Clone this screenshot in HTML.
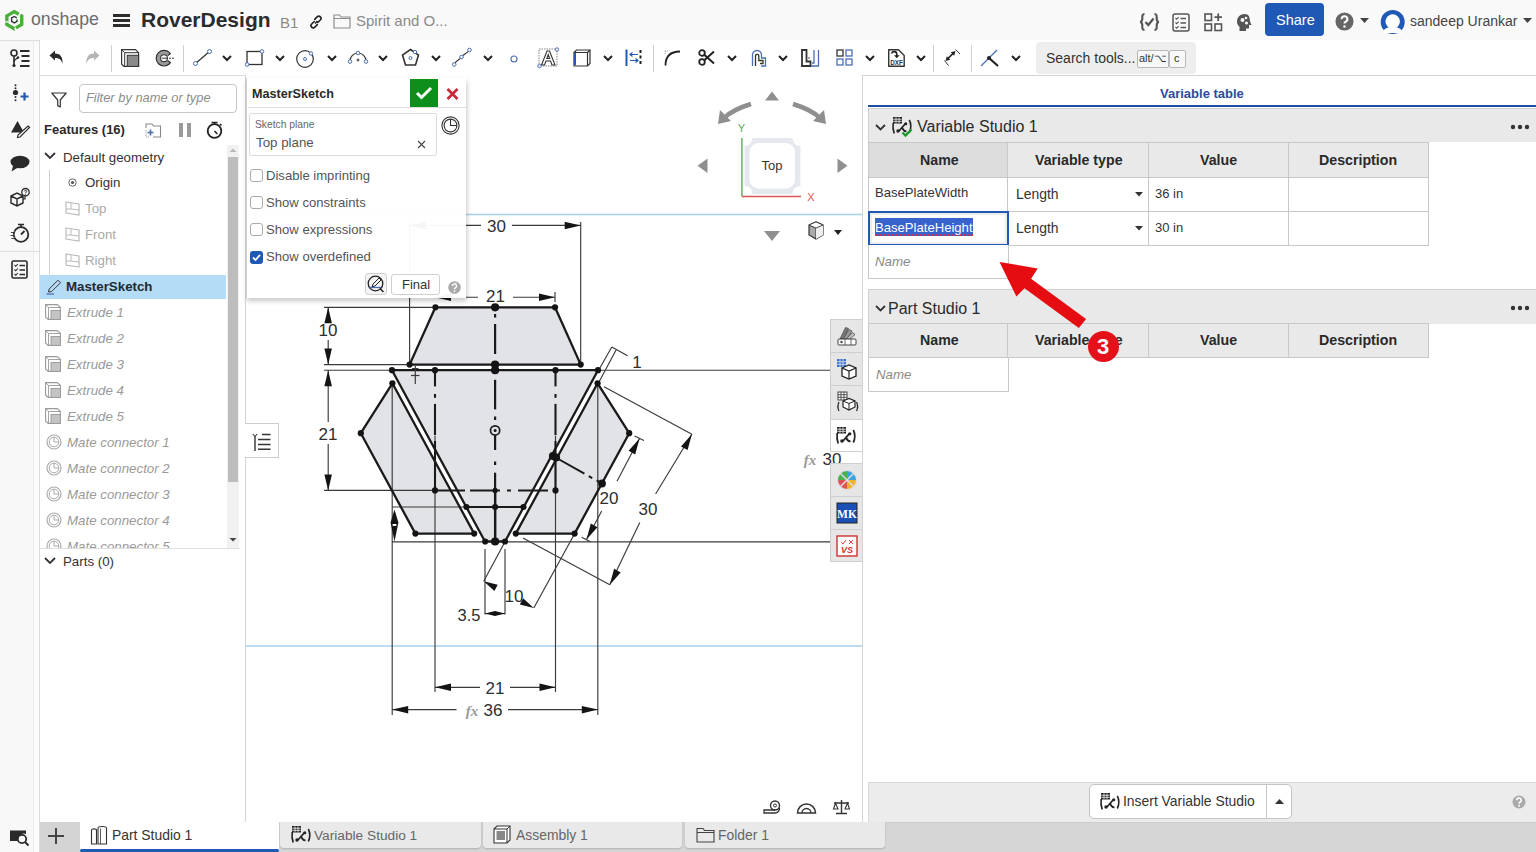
<!DOCTYPE html>
<html><head><meta charset="utf-8"><style>
*{box-sizing:border-box;margin:0;padding:0}
body{width:1536px;height:852px;overflow:hidden;position:relative;font-family:"Liberation Sans",sans-serif;background:#fff;color:#333}
.a{position:absolute}
.t{position:absolute;white-space:nowrap;line-height:1}
svg{position:absolute;overflow:visible}
</style></head><body>
<!-- HEADER -->
<div class="a" style="left:0;top:0;width:1536px;height:40px;background:#f9f9f9"></div>

<!-- logo -->
<svg style="left:0px;top:0px" width="30" height="40" viewBox="0 0 30 40">
<path d="M14.3 11.6 L21.75 15.9 L21.75 24.5 L14.3 28.8 L6.85 24.5 L6.85 15.9 Z" fill="none" stroke="#4cae3c" stroke-width="3.4" stroke-dasharray="5.2 1.8 17 1.8 10.5 1.4 30"/>
<path d="M16.8 17.9 L14.3 16.5 L11.6 18 L11.6 21.4 L14.3 22.9 L17 21.4 L17 19.5" fill="none" stroke="#35303a" stroke-width="1.4"/>
</svg>
<div class="t" style="left:31px;top:11px;font-size:17.7px;color:#6b6b6b;letter-spacing:0px">onshape</div>
<!-- hamburger -->
<div class="a" style="left:113px;top:14px;width:17px;height:3px;background:#2d2d2d"></div>
<div class="a" style="left:113px;top:19px;width:17px;height:3px;background:#2d2d2d"></div>
<div class="a" style="left:113px;top:24px;width:17px;height:3px;background:#2d2d2d"></div>
<div class="t" style="left:141px;top:9px;font-size:21px;font-weight:bold;color:#2b2b2b">RoverDesign</div>
<div class="t" style="left:280px;top:15px;font-size:15px;color:#8a8a8a">B1</div>
<!-- link icon -->
<svg style="left:308px;top:14px" width="16" height="16" viewBox="0 0 16 16">
<path d="M7 9.5 L9.5 7" stroke="#222" stroke-width="1.6" fill="none"/>
<path d="M6.2 7.5 L3.5 10.2 a2.2 2.2 0 0 0 3.1 3.1 L9.3 10.6" stroke="#222" stroke-width="1.6" fill="none" stroke-linecap="round"/>
<path d="M9.8 8.5 L12.5 5.8 a2.2 2.2 0 0 0 -3.1 -3.1 L6.7 5.4" stroke="#222" stroke-width="1.6" fill="none" stroke-linecap="round"/>
</svg>
<!-- folder icon -->
<svg style="left:333px;top:13px" width="18" height="16" viewBox="0 0 18 16">
<path d="M1 2 H6.5 L8 4 H17 V15 H1 Z" fill="none" stroke="#8c8c8c" stroke-width="1.2"/>
<path d="M1 5.5 H17" stroke="#8c8c8c" stroke-width="1"/>
</svg>
<div class="t" style="left:356px;top:13px;font-size:15px;color:#8a8a8a">Spirit and O...</div>
<!-- right header icons -->
<svg style="left:1139px;top:13px" width="21" height="18" viewBox="0 0 21 18"><path d="M5.5 1 C3 1 3.3 3 3.3 5.5 C3.3 7.8 2.8 8.6 1.2 9 C2.8 9.4 3.3 10.2 3.3 12.5 C3.3 15 3 17 5.5 17" fill="none" stroke="#555" stroke-width="2.1"/><path d="M15.5 1 C18 1 17.7 3 17.7 5.5 C17.7 7.8 18.2 8.6 19.8 9 C18.2 9.4 17.7 10.2 17.7 12.5 C17.7 15 18 17 15.5 17" fill="none" stroke="#555" stroke-width="2.1"/><path d="M6.5 9 L9.3 12 L14.5 5.5" fill="none" stroke="#555" stroke-width="2.3"/></svg>
<svg style="left:1172px;top:12.5px" width="18" height="19" viewBox="0 0 18 19">
<rect x="1" y="1" width="16" height="17" rx="2" fill="none" stroke="#555" stroke-width="1.5"/>
<path d="M3.5 5 l1.2 1.2 l2-2 M3.5 9.5 l1.2 1.2 l2-2 M3.5 14 l1.2 1.2 l2-2" stroke="#555" stroke-width="1.1" fill="none"/>
<path d="M8.5 5.5 H14 M8.5 10 H14 M8.5 14.5 H14" stroke="#555" stroke-width="1.4"/>
</svg>
<svg style="left:1204px;top:13px" width="19" height="19" viewBox="0 0 19 19">
<rect x="1" y="1" width="6.5" height="6.5" fill="none" stroke="#555" stroke-width="1.6"/>
<rect x="1" y="11" width="6.5" height="6.5" fill="none" stroke="#555" stroke-width="1.6"/>
<rect x="11" y="11" width="6.5" height="6.5" fill="none" stroke="#555" stroke-width="1.6"/>
<path d="M14.2 0.5 V8 M10.5 4.2 H18" stroke="#555" stroke-width="1.8"/>
</svg>
<svg style="left:1236px;top:12.5px" width="18" height="19" viewBox="0 0 18 19">
<path d="M9 1 C4 1 1 4.5 1 8.5 C1 11 2 12.5 3.5 13.5 V18 H10 V15.5 H13 V12 H15.5 L14 8.5 C14 4 12.5 1 9 1 Z" fill="#555"/>
<circle cx="6.5" cy="7" r="2" fill="#f7f7f7"/><circle cx="10.5" cy="10" r="1.6" fill="#f7f7f7"/><circle cx="10" cy="5" r="1.3" fill="#f7f7f7"/>
</svg>
<div class="a" style="left:1265px;top:3px;width:59px;height:33px;background:#1f58b5;border-radius:4px"></div>
<div class="t" style="left:1276px;top:13px;font-size:14.5px;color:#fff">Share</div>
<svg style="left:1335px;top:12px" width="19" height="19" viewBox="0 0 20 20">
<circle cx="10" cy="10" r="9.5" fill="#666"/>
<path d="M7 7.5 a3 3 0 1 1 4.2 2.7 c-1 .5 -1.2 1 -1.2 2" stroke="#fff" stroke-width="2.2" fill="none"/>
<circle cx="10" cy="15.3" r="1.3" fill="#fff"/>
</svg>
<svg style="left:1360px;top:18px" width="9" height="5" viewBox="0 0 9 5"><path d="M0 0 H9 L4.5 5 Z" fill="#444"/></svg>
<svg style="left:1380px;top:10px" width="26" height="23" viewBox="0 0 26 23"><circle cx="12.7" cy="12" r="12" fill="#1f58b5"/><circle cx="12.7" cy="11.5" r="7.2" fill="#fff"/><path d="M2 23 C4 18 8 17 12.7 17 C17.4 17 21.4 18 23.4 23 Z" fill="#fff"/></svg>
<div class="t" style="left:1410px;top:14px;font-size:14px;color:#444">sandeep Urankar</div>
<svg style="left:1523px;top:18px" width="9" height="5" viewBox="0 0 9 5"><path d="M0 0 H9 L4.5 5 Z" fill="#444"/></svg>

<!-- LEFT COLUMN -->
<div class="a" style="left:0;top:40px;width:40px;height:812px;background:#fbfbfb;border-right:1px solid #dcdcdc;border-top:1px solid #dedede"></div><div class="a" style="left:0;top:41px;width:34px;height:811px;background:#f8f8f8;border-right:1px solid #ececec"></div>
<!-- TOOLBAR -->
<div class="a" style="left:40px;top:40px;width:1496px;height:36px;background:#fff"></div>

<!-- toolbar icons -->
<svg style="left:49px;top:50px" width="15" height="15" viewBox="0 0 15 15"><path d="M0.5 5.5 L6 0.5 V3.5 C11 3.5 14 6.5 13.5 14 C12.5 9.5 10 8 6 8 V10.5 Z" fill="#2a2a2a"/></svg>
<svg style="left:85px;top:50px" width="15" height="15" viewBox="0 0 15 15"><path d="M14.5 5.5 L9 0.5 V3.5 C4 3.5 1 6.5 1.5 14 C2.5 9.5 5 8 9 8 V10.5 Z" fill="#b5b5b5"/></svg>
<div class="a" style="left:111px;top:45px;width:1px;height:27px;background:#cfcfcf"></div>
<svg style="left:121px;top:49px" width="18" height="18" viewBox="0 0 18 18"><path d="M0.6 0.6 H14.5 L17.6 3.7 V17.4 H2.8 L0.6 15 Z" fill="#fff" stroke="#333" stroke-width="1.2" stroke-linejoin="round"/><path d="M0.6 0.6 L3.7 3.7 H17.6 M3.7 3.7 V17.4" stroke="#333" stroke-width="1" fill="none"/><rect x="6.3" y="6.3" width="11.3" height="11.1" fill="#8a8a8a" stroke="#333" stroke-width="1"/></svg>
<svg style="left:156px;top:49px" width="19" height="19" viewBox="0 0 19 19"><circle cx="8" cy="9.2" r="7.8" fill="#9a9a9a" stroke="#333" stroke-width="1.2"/><path d="M8 9.2 L16.5 3.5 L17.5 14.8 Z" fill="#fff"/><path d="M11.8 6.6 L14.4 4.6 M11.8 11.8 L14.4 13.8" stroke="#333" stroke-width="1.2"/><circle cx="8" cy="9.2" r="3.4" fill="#fff" stroke="#333" stroke-width="1.1"/><path d="M6 9.2 H12 M13 9.2 H15 M16 9.2 H18" stroke="#333" stroke-width="1"/></svg>
<div class="a" style="left:183px;top:45px;width:1px;height:27px;background:#cfcfcf"></div>
<svg style="left:193px;top:49px" width="19" height="17" viewBox="0 0 19 17"><path d="M2.5 14.5 L16.5 2.5" stroke="#333" stroke-width="1.3"/><circle cx="2.5" cy="14.5" r="2" fill="#fff" stroke="#4a6fb5" stroke-width="1"/><circle cx="16.5" cy="2.5" r="2" fill="#fff" stroke="#4a6fb5" stroke-width="1"/></svg>
<svg style="left:222px;top:55px" width="10" height="6" viewBox="0 0 10 6"><path d="M1 1 L5 5 L9 1" stroke="#222" stroke-width="2" fill="none"/></svg>
<svg style="left:245px;top:49px" width="19" height="17" viewBox="0 0 19 17"><rect x="2" y="2.5" width="15" height="13" fill="none" stroke="#333" stroke-width="1.3"/><circle cx="2" cy="15.5" r="1.8" fill="#fff" stroke="#4a6fb5"/><circle cx="17" cy="2.5" r="1.8" fill="#fff" stroke="#4a6fb5"/></svg>
<svg style="left:275px;top:55px" width="10" height="6" viewBox="0 0 10 6"><path d="M1 1 L5 5 L9 1" stroke="#222" stroke-width="2" fill="none"/></svg>
<svg style="left:296px;top:49px" width="19" height="19" viewBox="0 0 19 19"><circle cx="9" cy="10" r="8.3" fill="none" stroke="#333" stroke-width="1.2"/><circle cx="9" cy="10" r="1.5" fill="none" stroke="#4a6fb5"/><circle cx="15" cy="4.5" r="1.7" fill="#fff" stroke="#4a6fb5"/></svg>
<svg style="left:327px;top:55px" width="10" height="6" viewBox="0 0 10 6"><path d="M1 1 L5 5 L9 1" stroke="#222" stroke-width="2" fill="none"/></svg>
<svg style="left:348px;top:49px" width="20" height="16" viewBox="0 0 20 16"><path d="M2 12 A8 8 0 0 1 18 12" fill="none" stroke="#333" stroke-width="1.2"/><circle cx="2" cy="12.5" r="1.8" fill="#fff" stroke="#4a6fb5"/><circle cx="18" cy="12.5" r="1.8" fill="#fff" stroke="#4a6fb5"/><circle cx="10" cy="4" r="1.8" fill="#fff" stroke="#4a6fb5"/><path d="M8.5 11 H11.5 M10 9.5 V12.5" stroke="#333" stroke-width="1"/></svg>
<svg style="left:378px;top:55px" width="10" height="6" viewBox="0 0 10 6"><path d="M1 1 L5 5 L9 1" stroke="#222" stroke-width="2" fill="none"/></svg>
<svg style="left:401px;top:48px" width="19" height="19" viewBox="0 0 19 19"><path d="M9.5 1.5 L17.5 7 L14.5 17 H4.5 L1.5 7 Z" fill="none" stroke="#333" stroke-width="1.6"/><circle cx="9.5" cy="10" r="1.5" fill="none" stroke="#4a6fb5"/><circle cx="14" cy="4" r="1.7" fill="#fff" stroke="#4a6fb5"/></svg>
<svg style="left:431px;top:55px" width="10" height="6" viewBox="0 0 10 6"><path d="M1 1 L5 5 L9 1" stroke="#222" stroke-width="2" fill="none"/></svg>
<svg style="left:452px;top:48px" width="20" height="19" viewBox="0 0 20 19"><path d="M2 16.5 C5 11 8 12 9.5 9 C11 6 15 6 17.5 2" fill="none" stroke="#333" stroke-width="1.2"/><circle cx="2.2" cy="16.5" r="1.8" fill="#fff" stroke="#4a6fb5"/><circle cx="9.5" cy="9" r="1.8" fill="#fff" stroke="#4a6fb5"/><circle cx="17.5" cy="2" r="1.8" fill="#fff" stroke="#4a6fb5"/></svg>
<svg style="left:483px;top:55px" width="10" height="6" viewBox="0 0 10 6"><path d="M1 1 L5 5 L9 1" stroke="#222" stroke-width="2" fill="none"/></svg>
<svg style="left:510px;top:55px" width="8" height="8" viewBox="0 0 8 8"><circle cx="4" cy="4" r="3" fill="none" stroke="#4a6fb5" stroke-width="1.1"/></svg>
<svg style="left:538px;top:48px" width="21" height="20" viewBox="0 0 21 20"><rect x="1" y="1" width="18" height="17" fill="none" stroke="#666" stroke-width="0.8" stroke-dasharray="1.5 1"/><path d="M3.5 17 L9 3 H11.5 L17 17 H14 L12.5 13 H8 L6.5 17 Z M8.8 10.5 H11.7 L10.2 6.5 Z" fill="#fff" stroke="#333" stroke-width="1.1"/><circle cx="1.5" cy="18" r="1.7" fill="#fff" stroke="#4a6fb5"/><circle cx="19" cy="1.5" r="1.7" fill="#fff" stroke="#4a6fb5"/></svg>
<svg style="left:573px;top:49px" width="18" height="18" viewBox="0 0 18 18"><path d="M1 3.5 L3.5 1 H17 V14.5 L14.5 17 H1 Z" fill="none" stroke="#333" stroke-width="1.2"/><path d="M1 3.5 H14.5 V17 M14.5 3.5 L17 1" stroke="#333" stroke-width="1.2" fill="none"/><path d="M2 4 V16" stroke="#1f58b5" stroke-width="2"/></svg>
<svg style="left:603px;top:55px" width="10" height="6" viewBox="0 0 10 6"><path d="M1 1 L5 5 L9 1" stroke="#222" stroke-width="2" fill="none"/></svg>
<svg style="left:625px;top:49px" width="18" height="18" viewBox="0 0 18 18"><path d="M1.5 0.5 V17" stroke="#1f58b5" stroke-width="2"/><path d="M15.5 1 V17" stroke="#222" stroke-width="2" stroke-dasharray="3 2.5"/><path d="M13 5.5 H5.5 M7.5 3.5 L5 5.5 L7.5 7.5 M5 11.5 H12.5 M10.5 9.5 L13 11.5 L10.5 13.5" stroke="#1f58b5" stroke-width="1.2" fill="none"/></svg>
<div class="a" style="left:653px;top:45px;width:1px;height:27px;background:#cfcfcf"></div>
<svg style="left:664px;top:50px" width="17" height="16" viewBox="0 0 17 16"><path d="M1.5 15.5 C1.5 7 6 1.5 16 1.5" fill="none" stroke="#222" stroke-width="1.8"/><path d="M1 1 H4 M1 1 V4" stroke="#888" stroke-width="0.8" stroke-dasharray="1 1"/></svg>
<svg style="left:698px;top:49px" width="17" height="17" viewBox="0 0 17 17"><circle cx="4" cy="4" r="2.8" fill="none" stroke="#222" stroke-width="1.8"/><circle cx="4" cy="13" r="2.8" fill="none" stroke="#222" stroke-width="1.8"/><path d="M6 5.5 L16 14.5 M6 11.5 L16 2.5" stroke="#222" stroke-width="2"/></svg>
<svg style="left:727px;top:55px" width="10" height="6" viewBox="0 0 10 6"><path d="M1 1 L5 5 L9 1" stroke="#222" stroke-width="2" fill="none"/></svg>
<svg style="left:751px;top:49px" width="16" height="18" viewBox="0 0 16 18"><path d="M1.5 17 V6 A4.5 4.5 0 0 1 10.5 6 V9 H14.5 V17 H10" fill="none" stroke="#4a6fb5" stroke-width="1.3"/><path d="M4.5 17 V6.5 A1.8 1.8 0 0 1 7.8 6.5 V11.5 H12 V14.5 H9" fill="none" stroke="#333" stroke-width="1.3"/></svg>
<svg style="left:778px;top:55px" width="10" height="6" viewBox="0 0 10 6"><path d="M1 1 L5 5 L9 1" stroke="#222" stroke-width="2" fill="none"/></svg>
<svg style="left:801px;top:49px" width="19" height="18" viewBox="0 0 19 18"><path d="M1 1 H5.5 V12.5 H9.5 V17 H1 Z" fill="none" stroke="#333" stroke-width="1.8"/><path d="M13 1 V14 H11 M17.5 1 V17 H10" fill="none" stroke="#4a6fb5" stroke-width="1.3"/><circle cx="8" cy="9" r="0.8" fill="#333"/></svg>
<svg style="left:836px;top:49px" width="17" height="17" viewBox="0 0 17 17"><rect x="1" y="1" width="6" height="6" fill="none" stroke="#333" stroke-width="1.3"/><rect x="10" y="1" width="6" height="6" fill="none" stroke="#4a6fb5" stroke-width="1.3"/><rect x="1" y="10" width="6" height="6" fill="none" stroke="#4a6fb5" stroke-width="1.3"/><rect x="10" y="10" width="6" height="6" fill="none" stroke="#4a6fb5" stroke-width="1.3"/></svg>
<svg style="left:865px;top:55px" width="10" height="6" viewBox="0 0 10 6"><path d="M1 1 L5 5 L9 1" stroke="#222" stroke-width="2" fill="none"/></svg>
<svg style="left:888px;top:49px" width="17" height="18" viewBox="0 0 17 18"><path d="M0.7 0.7 H10.5 L16.2 6.4 V17.3 H0.7 Z" fill="#fff" stroke="#333" stroke-width="1.4" stroke-linejoin="round"/><path d="M3.5 4.5 C4.5 1.8 8.8 1.8 8.8 5.5 V7.5" stroke="#222" stroke-width="1.6" fill="none"/><path d="M6 6.2 L8.8 9.3 L11.6 6.2 Z" fill="#222"/><text x="8.5" y="16" font-size="6.3" font-family="Liberation Sans" font-weight="bold" text-anchor="middle" fill="#333">DXF</text></svg>
<svg style="left:916px;top:55px" width="10" height="6" viewBox="0 0 10 6"><path d="M1 1 L5 5 L9 1" stroke="#222" stroke-width="2" fill="none"/></svg>
<div class="a" style="left:933px;top:45px;width:1px;height:27px;background:#cfcfcf"></div>
<svg style="left:944px;top:49px" width="17" height="18" viewBox="0 0 17 18"><path d="M3.5 10 L9.5 4" stroke="#222" stroke-width="1.7"/><path d="M1.5 12 L2.8 7.2 L6.3 10.7 Z M11.5 2 L6.7 3.3 L10.2 6.8 Z" fill="#222"/><path d="M0.5 11.5 L4.5 16.5 M11.5 0.5 L16 5" stroke="#333" stroke-width="1"/></svg>
<div class="a" style="left:971px;top:45px;width:1px;height:27px;background:#cfcfcf"></div>
<svg style="left:980px;top:49px" width="19" height="18" viewBox="0 0 19 18"><path d="M1 17 L17 1" stroke="#4a6fb5" stroke-width="1.3"/><path d="M9 9 L18 17" stroke="#222" stroke-width="2.2"/><circle cx="9" cy="9" r="2" fill="#222"/></svg>
<svg style="left:1011px;top:55px" width="10" height="6" viewBox="0 0 10 6"><path d="M1 1 L5 5 L9 1" stroke="#222" stroke-width="2" fill="none"/></svg>
<div class="a" style="left:1036px;top:42px;width:160px;height:32px;background:#eeeeee;border-radius:4px"></div>
<div class="t" style="left:1046px;top:51px;font-size:14px;color:#333">Search tools...</div>
<div class="a" style="left:1137px;top:50px;width:32px;height:18px;background:#f8f8f8;border:1px solid #b8b8b8;border-radius:2px"></div>
<div class="t" style="left:1139px;top:53px;font-size:11px;color:#333">alt/&#8997;</div>
<div class="a" style="left:1169px;top:50px;width:17px;height:18px;background:#f8f8f8;border:1px solid #b8b8b8;border-radius:2px"></div>
<div class="t" style="left:1174px;top:53px;font-size:11px;color:#333">c</div>

<!-- left column icons -->
<svg style="left:10px;top:49px" width="20" height="19" viewBox="0 0 20 19"><circle cx="4" cy="4" r="3" fill="none" stroke="#2a2a2a" stroke-width="1.6"/><path d="M4 7 V16.5" stroke="#2a2a2a" stroke-width="1.6"/><circle cx="4" cy="16.5" r="1.6" fill="#2a2a2a"/><path d="M4 13 C4 10 7 10 8 8.5" stroke="#2a2a2a" stroke-width="1.4" fill="none"/><circle cx="8" cy="8.5" r="1.2" fill="#2a2a2a"/><path d="M10 2 H19.5 M11.5 7 H19.5 M11.5 12 H19.5 M10 17 H19.5" stroke="#2a2a2a" stroke-width="1.8"/></svg>
<svg style="left:12px;top:84px" width="18" height="18" viewBox="0 0 18 18"><circle cx="3.5" cy="1.2" r="1" fill="#2a2a2a"/><circle cx="3.5" cy="4.2" r="1" fill="#2a2a2a"/><circle cx="3.5" cy="8.5" r="2.6" fill="#2a2a2a"/><circle cx="3.5" cy="13" r="1" fill="#2a2a2a"/><circle cx="3.5" cy="16.2" r="1" fill="#2a2a2a"/><path d="M8.5 12.5 H16.5 M12.5 8.5 V16.5" stroke="#1f58b5" stroke-width="2.2"/></svg>
<svg style="left:11px;top:120px" width="19" height="18" viewBox="0 0 19 18"><path d="M6.5 1 L13 12.5 H0 Z" fill="#2a2a2a"/><path d="M17 6 L18.5 7.5 L9 17 L6.5 17.5 L7 15 Z" fill="#fff" stroke="#2a2a2a" stroke-width="1.2"/></svg>
<svg style="left:10px;top:155px" width="20" height="17" viewBox="0 0 20 17"><ellipse cx="10" cy="7" rx="9.5" ry="6.3" fill="#2a2a2a"/><path d="M3 11 L1.5 16.5 L8 12.5 Z" fill="#2a2a2a"/></svg>
<svg style="left:10px;top:188px" width="20" height="19" viewBox="0 0 20 19"><path d="M1 8 L7 5 L13 8 V15 L7 18 L1 15 Z M1 8 L7 11 L13 8 M7 11 V18" fill="none" stroke="#2a2a2a" stroke-width="1.4"/><circle cx="15.5" cy="4.2" r="3.7" fill="#fff" stroke="#2a2a2a" stroke-width="1.3"/><text x="15.5" y="6.6" font-size="6.5" font-weight="bold" font-family="Liberation Sans" text-anchor="middle" fill="#2a2a2a">?</text><path d="M15 8 V11 H13" stroke="#2a2a2a" stroke-width="1.2" fill="none"/></svg>
<svg style="left:10px;top:223px" width="20" height="20" viewBox="0 0 20 20"><circle cx="11" cy="11.5" r="7.3" fill="none" stroke="#2a2a2a" stroke-width="1.8"/><path d="M8 1.5 H14 M11 1.5 V4" stroke="#2a2a2a" stroke-width="1.6"/><path d="M11 11.5 L14.5 8" stroke="#2a2a2a" stroke-width="1.8"/><path d="M0.5 9 H4.5 M0.5 12 H3.5 M1.5 15 H4.5" stroke="#fff" stroke-width="1.2"/><path d="M1 9.5 H5 M0.5 12.5 H4 M1.5 15.5 H5" stroke="#2a2a2a" stroke-width="0.9"/></svg>
<div class="a" style="left:0;top:251px;width:40px;height:1px;background:#dedede"></div>
<svg style="left:11px;top:260px" width="17" height="19" viewBox="0 0 17 19"><rect x="1" y="1" width="15" height="17" rx="1.5" fill="none" stroke="#2a2a2a" stroke-width="1.6"/><path d="M3.5 5 l1.3 1.3 l2-2.3 M3.5 9.5 l1.3 1.3 l2-2.3 M3.5 14 l1.3 1.3 l2-2.3" stroke="#2a2a2a" stroke-width="1.1" fill="none"/><path d="M8.5 5.5 H14 M8.5 10 H14 M8.5 14.5 H14" stroke="#2a2a2a" stroke-width="1.7"/></svg>
<svg style="left:9px;top:829px" width="21" height="17" viewBox="0 0 21 17"><path d="M1 1.5 H17 V5 A6 6 0 0 0 9 12 H1 Z" fill="#2a2a2a"/><circle cx="13" cy="10" r="4.2" fill="none" stroke="#2a2a2a" stroke-width="1.8"/><path d="M16 13 L19.5 16.5" stroke="#2a2a2a" stroke-width="2"/></svg>

<!-- FEATURE PANEL -->
<div class="a" style="left:40px;top:75px;width:206px;height:747px;background:#fff;border-right:1px solid #d4d4d4;border-top:1px solid #dcdcdc"></div>

<!-- feature panel content -->
<svg style="left:51px;top:92px" width="16" height="16" viewBox="0 0 16 16"><path d="M0.8 1 H15.2 L9.3 8 V15 L6.7 13.6 V8 Z" fill="none" stroke="#333" stroke-width="1.2" stroke-linejoin="round"/></svg>
<div class="a" style="left:79px;top:84px;width:158px;height:29px;border:1px solid #c6c6c6;border-radius:4px;background:#fff"></div>
<div class="t" style="left:86px;top:92px;font-size:12.9px;font-style:italic;color:#8c8c8c">Filter by name or type</div>
<div class="t" style="left:44px;top:123px;font-size:13px;font-weight:bold;color:#2a2a2a">Features (16)</div>
<svg style="left:145px;top:121px" width="20" height="17" viewBox="0 0 20 17"><path d="M1 7 V3 H7 L8.5 5 H15.5 V16 H8" fill="none" stroke="#888" stroke-width="1.1"/><path d="M1 9 V16 H4" fill="none" stroke="#9a9a9a" stroke-width="1" stroke-dasharray="1.3 1"/><path d="M2.5 11.5 H8.5 M5.5 8.5 V14.5" stroke="#4a6fb5" stroke-width="1.6"/></svg>
<div class="a" style="left:179px;top:123px;width:4px;height:14px;background:#9a9a9a"></div>
<div class="a" style="left:187px;top:123px;width:4px;height:14px;background:#9a9a9a"></div>
<svg style="left:206px;top:121px" width="17" height="18" viewBox="0 0 17 18"><circle cx="8.5" cy="10" r="6.8" fill="none" stroke="#222" stroke-width="1.8"/><path d="M5.5 1.5 H11.5 M8.5 1.5 V3.3 M14 3 L15.5 4.5" stroke="#222" stroke-width="1.6"/><path d="M8.5 10 L11.3 13" stroke="#222" stroke-width="1.6"/></svg>
<!-- tree -->
<svg style="left:44px;top:152px" width="12" height="8" viewBox="0 0 12 8"><path d="M1 1 L6 6 L11 1" stroke="#333" stroke-width="1.8" fill="none"/></svg>
<div class="t" style="left:63px;top:151px;font-size:13.3px;color:#333">Default geometry</div>
<div class="a" style="left:49px;top:170px;width:1px;height:104px;background:#cfcfcf"></div>
<svg style="left:68px;top:178px" width="9" height="9" viewBox="0 0 9 9"><circle cx="4.5" cy="4.5" r="3.7" fill="none" stroke="#555" stroke-width="0.9"/><circle cx="4.5" cy="4.5" r="1.6" fill="#555"/></svg>
<div class="t" style="left:85px;top:176px;font-size:13.3px;color:#333">Origin</div>
<svg style="left:65px;top:201px" width="15" height="15" viewBox="0 0 15 15"><path d="M1 1 L14 3 V14 L1 12 Z" fill="#fff" stroke="#bbb" stroke-width="1.2"/><path d="M6 1.8 V8 H1 M6 8 L14 9" stroke="#bbb" stroke-width="1" fill="none"/></svg>
<div class="t" style="left:85px;top:202px;font-size:13.3px;color:#aaa">Top</div>
<svg style="left:65px;top:227px" width="15" height="15" viewBox="0 0 15 15"><path d="M1 1 L14 3 V14 L1 12 Z" fill="#fff" stroke="#bbb" stroke-width="1.2"/><path d="M6 1.8 V8 H1 M6 8 L14 9" stroke="#bbb" stroke-width="1" fill="none"/></svg>
<div class="t" style="left:85px;top:228px;font-size:13.3px;color:#aaa">Front</div>
<svg style="left:65px;top:253px" width="15" height="15" viewBox="0 0 15 15"><path d="M1 1 L14 3 V14 L1 12 Z" fill="#fff" stroke="#bbb" stroke-width="1.2"/><path d="M6 1.8 V8 H1 M6 8 L14 9" stroke="#bbb" stroke-width="1" fill="none"/></svg>
<div class="t" style="left:85px;top:254px;font-size:13.3px;color:#aaa">Right</div>
<div class="a" style="left:40px;top:275px;width:186px;height:24px;background:#b5dcf6"></div>
<svg style="left:46px;top:279px" width="16" height="16" viewBox="0 0 16 16"><path d="M2.5 13 L3.2 10 L12 1.2 L14.5 3.7 L5.7 12.5 Z" fill="none" stroke="#333" stroke-width="1"/><path d="M0.5 15 H8" stroke="#4a6fb5" stroke-width="1.3"/></svg>
<div class="t" style="left:66px;top:280px;font-size:13.3px;font-weight:bold;color:#1e2a35">MasterSketch</div>
<svg style="left:45px;top:304px" width="17" height="17" viewBox="0 0 17 17"><path d="M0.6 0.6 H12.5 L15.4 3.5 V15.4 H3 L0.6 13 Z" fill="#fff" stroke="#999" stroke-width="1.1" stroke-linejoin="round"/><path d="M0.6 0.6 L3.5 3.5 H15.4 M3.5 3.5 V15.4" stroke="#999" stroke-width="0.9" fill="none"/><rect x="6" y="6.5" width="9.4" height="8.9" fill="#c4c4c4" stroke="#999" stroke-width="0.9"/></svg><div class="t" style="left:67px;top:306px;font-size:13.3px;font-style:italic;color:#9a9a9a">Extrude 1</div>
<svg style="left:45px;top:330px" width="17" height="17" viewBox="0 0 17 17"><path d="M0.6 0.6 H12.5 L15.4 3.5 V15.4 H3 L0.6 13 Z" fill="#fff" stroke="#999" stroke-width="1.1" stroke-linejoin="round"/><path d="M0.6 0.6 L3.5 3.5 H15.4 M3.5 3.5 V15.4" stroke="#999" stroke-width="0.9" fill="none"/><rect x="6" y="6.5" width="9.4" height="8.9" fill="#c4c4c4" stroke="#999" stroke-width="0.9"/></svg><div class="t" style="left:67px;top:332px;font-size:13.3px;font-style:italic;color:#9a9a9a">Extrude 2</div>
<svg style="left:45px;top:356px" width="17" height="17" viewBox="0 0 17 17"><path d="M0.6 0.6 H12.5 L15.4 3.5 V15.4 H3 L0.6 13 Z" fill="#fff" stroke="#999" stroke-width="1.1" stroke-linejoin="round"/><path d="M0.6 0.6 L3.5 3.5 H15.4 M3.5 3.5 V15.4" stroke="#999" stroke-width="0.9" fill="none"/><rect x="6" y="6.5" width="9.4" height="8.9" fill="#c4c4c4" stroke="#999" stroke-width="0.9"/></svg><div class="t" style="left:67px;top:358px;font-size:13.3px;font-style:italic;color:#9a9a9a">Extrude 3</div>
<svg style="left:45px;top:382px" width="17" height="17" viewBox="0 0 17 17"><path d="M0.6 0.6 H12.5 L15.4 3.5 V15.4 H3 L0.6 13 Z" fill="#fff" stroke="#999" stroke-width="1.1" stroke-linejoin="round"/><path d="M0.6 0.6 L3.5 3.5 H15.4 M3.5 3.5 V15.4" stroke="#999" stroke-width="0.9" fill="none"/><rect x="6" y="6.5" width="9.4" height="8.9" fill="#c4c4c4" stroke="#999" stroke-width="0.9"/></svg><div class="t" style="left:67px;top:384px;font-size:13.3px;font-style:italic;color:#9a9a9a">Extrude 4</div>
<svg style="left:45px;top:408px" width="17" height="17" viewBox="0 0 17 17"><path d="M0.6 0.6 H12.5 L15.4 3.5 V15.4 H3 L0.6 13 Z" fill="#fff" stroke="#999" stroke-width="1.1" stroke-linejoin="round"/><path d="M0.6 0.6 L3.5 3.5 H15.4 M3.5 3.5 V15.4" stroke="#999" stroke-width="0.9" fill="none"/><rect x="6" y="6.5" width="9.4" height="8.9" fill="#c4c4c4" stroke="#999" stroke-width="0.9"/></svg><div class="t" style="left:67px;top:410px;font-size:13.3px;font-style:italic;color:#9a9a9a">Extrude 5</div>
<svg style="left:46px;top:434px" width="16" height="16" viewBox="0 0 16 16"><circle cx="8" cy="8" r="7" fill="none" stroke="#aaa" stroke-width="1.2"/><circle cx="8" cy="8" r="4.8" fill="none" stroke="#aaa" stroke-width="1"/><path d="M8 3.2 V8 H12.8" stroke="#aaa" stroke-width="1" fill="none"/></svg><div class="t" style="left:67px;top:436px;font-size:13.3px;font-style:italic;color:#9a9a9a">Mate connector 1</div>
<svg style="left:46px;top:460px" width="16" height="16" viewBox="0 0 16 16"><circle cx="8" cy="8" r="7" fill="none" stroke="#aaa" stroke-width="1.2"/><circle cx="8" cy="8" r="4.8" fill="none" stroke="#aaa" stroke-width="1"/><path d="M8 3.2 V8 H12.8" stroke="#aaa" stroke-width="1" fill="none"/></svg><div class="t" style="left:67px;top:462px;font-size:13.3px;font-style:italic;color:#9a9a9a">Mate connector 2</div>
<svg style="left:46px;top:486px" width="16" height="16" viewBox="0 0 16 16"><circle cx="8" cy="8" r="7" fill="none" stroke="#aaa" stroke-width="1.2"/><circle cx="8" cy="8" r="4.8" fill="none" stroke="#aaa" stroke-width="1"/><path d="M8 3.2 V8 H12.8" stroke="#aaa" stroke-width="1" fill="none"/></svg><div class="t" style="left:67px;top:488px;font-size:13.3px;font-style:italic;color:#9a9a9a">Mate connector 3</div>
<svg style="left:46px;top:512px" width="16" height="16" viewBox="0 0 16 16"><circle cx="8" cy="8" r="7" fill="none" stroke="#aaa" stroke-width="1.2"/><circle cx="8" cy="8" r="4.8" fill="none" stroke="#aaa" stroke-width="1"/><path d="M8 3.2 V8 H12.8" stroke="#aaa" stroke-width="1" fill="none"/></svg><div class="t" style="left:67px;top:514px;font-size:13.3px;font-style:italic;color:#9a9a9a">Mate connector 4</div>
<svg style="left:46px;top:538px" width="16" height="16" viewBox="0 0 16 16"><circle cx="8" cy="8" r="7" fill="none" stroke="#aaa" stroke-width="1.2"/><circle cx="8" cy="8" r="4.8" fill="none" stroke="#aaa" stroke-width="1"/><path d="M8 3.2 V8 H12.8" stroke="#aaa" stroke-width="1" fill="none"/></svg><div class="t" style="left:67px;top:540px;font-size:13.3px;font-style:italic;color:#9a9a9a">Mate connector 5</div>

<div class="a" style="left:40px;top:548px;width:205px;height:274px;background:#fff"></div>
<!-- scrollbar -->
<div class="a" style="left:227px;top:145px;width:12px;height:403px;background:#f1f1f1"></div>
<svg style="left:229px;top:147px" width="8" height="6" viewBox="0 0 8 6"><path d="M0.5 5 L4 1.5 L7.5 5 Z" fill="#bbb"/></svg>
<div class="a" style="left:228px;top:157px;width:10px;height:325px;background:#bdbdbd"></div>
<svg style="left:229px;top:537px" width="8" height="6" viewBox="0 0 8 6"><path d="M0.5 1 L4 4.5 L7.5 1 Z" fill="#444"/></svg>
<div class="a" style="left:40px;top:548px;width:200px;height:1px;background:#e0e0e0"></div>
<svg style="left:44px;top:557px" width="12" height="8" viewBox="0 0 12 8"><path d="M1 1 L6 6 L11 1" stroke="#333" stroke-width="1.8" fill="none"/></svg>
<div class="t" style="left:63px;top:555px;font-size:13.3px;color:#333">Parts (0)</div>

<!--GFX-START-->
<svg style="left:246px;top:76px" width="616" height="746" viewBox="246 76 616 746"><line x1="246" y1="214.5" x2="862" y2="214.5" stroke="#a8d0ec" stroke-width="1.3" />
<line x1="246" y1="646" x2="862" y2="646" stroke="#a8d0ec" stroke-width="1.3" />
<path d="M435.4 307.3 L555 307.3 L580.7 364.6 L409.6 364.6 Z" fill="#e1e3e6"/>
<path d="M392 370.2 L598 370.2 L505 541.5 L485 541.5 Z" fill="#e1e3e6"/>
<path d="M392.4 383.3 L360.8 433.2 L415.4 533.6 L474.2 533.6 Z" fill="#e1e3e6"/>
<path d="M597.6 383.3 L629.2 433.2 L574.6 533.6 L515.8 533.6 Z" fill="#e1e3e6"/>
<line x1="324" y1="307.3" x2="435.4" y2="307.3" stroke="#3a3a3a" stroke-width="1.15" />
<line x1="324" y1="364.6" x2="409.6" y2="364.6" stroke="#3a3a3a" stroke-width="1.15" />
<line x1="324" y1="370.2" x2="392" y2="370.2" stroke="#3a3a3a" stroke-width="1.15" />
<line x1="598" y1="370.2" x2="831" y2="370.2" stroke="#3a3a3a" stroke-width="1.15" />
<line x1="324" y1="490.4" x2="435" y2="490.4" stroke="#3a3a3a" stroke-width="1.15" />
<line x1="392" y1="507" x2="466.4" y2="507" stroke="#3a3a3a" stroke-width="1.15" />
<line x1="392" y1="541.8" x2="485" y2="541.8" stroke="#3a3a3a" stroke-width="1.15" />
<line x1="505" y1="541.8" x2="831" y2="541.8" stroke="#3a3a3a" stroke-width="1.15" />
<line x1="409.6" y1="222" x2="409.6" y2="364.6" stroke="#3a3a3a" stroke-width="1.15" />
<line x1="580.7" y1="222" x2="580.7" y2="364.6" stroke="#3a3a3a" stroke-width="1.15" />
<line x1="392.2" y1="383.3" x2="392.2" y2="715" stroke="#3a3a3a" stroke-width="1.15" />
<line x1="435" y1="436" x2="435" y2="692" stroke="#3a3a3a" stroke-width="1.15" />
<line x1="555.5" y1="436" x2="555.5" y2="692" stroke="#3a3a3a" stroke-width="1.15" />
<line x1="597.8" y1="383.3" x2="597.8" y2="715" stroke="#3a3a3a" stroke-width="1.15" />
<line x1="485" y1="549" x2="485" y2="614.5" stroke="#3a3a3a" stroke-width="1.15" />
<line x1="505" y1="549" x2="505" y2="614.5" stroke="#3a3a3a" stroke-width="1.15" />
<line x1="409.6" y1="225.4" x2="481" y2="225.4" stroke="#3a3a3a" stroke-width="1.15" />
<line x1="512" y1="225.4" x2="580.7" y2="225.4" stroke="#3a3a3a" stroke-width="1.15" />
<path d="M580.7 225.4 L564.7 229.2 L564.7 221.7 Z" fill="#141414"/>
<path d="M409.6 225.4 L425.6 221.7 L425.6 229.2 Z" fill="#141414"/>
<text x="496.5" y="232" font-size="17" font-family="Liberation Sans" fill="#2e2e2e" text-anchor="middle" >30</text>
<line x1="435" y1="297.2" x2="478" y2="297.2" stroke="#3a3a3a" stroke-width="1.15" />
<line x1="513" y1="297.2" x2="555" y2="297.2" stroke="#3a3a3a" stroke-width="1.15" />
<path d="M555.0 297.2 L539.0 300.9 L539.0 293.4 Z" fill="#141414"/>
<path d="M435.0 297.2 L451.0 293.4 L451.0 300.9 Z" fill="#141414"/>
<line x1="555" y1="292" x2="555" y2="302" stroke="#3a3a3a" stroke-width="1.15" />
<text x="495.5" y="302" font-size="17" font-family="Liberation Sans" fill="#2e2e2e" text-anchor="middle" >21</text>
<line x1="328.2" y1="307.3" x2="328.2" y2="320" stroke="#3a3a3a" stroke-width="1.15" />
<line x1="328.2" y1="340" x2="328.2" y2="364.6" stroke="#3a3a3a" stroke-width="1.15" />
<path d="M328.2 307.3 L331.9 323.3 L324.4 323.3 Z" fill="#141414"/>
<path d="M328.2 364.6 L324.4 348.6 L331.9 348.6 Z" fill="#141414"/>
<text x="328" y="335.5" font-size="17" font-family="Liberation Sans" fill="#2e2e2e" text-anchor="middle" >10</text>
<line x1="328.2" y1="370.2" x2="328.2" y2="422" stroke="#3a3a3a" stroke-width="1.15" />
<line x1="328.2" y1="444" x2="328.2" y2="490.4" stroke="#3a3a3a" stroke-width="1.15" />
<path d="M328.2 370.2 L331.9 386.2 L324.4 386.2 Z" fill="#141414"/>
<path d="M328.2 490.4 L324.4 474.4 L331.9 474.4 Z" fill="#141414"/>
<text x="328" y="439.5" font-size="17" font-family="Liberation Sans" fill="#2e2e2e" text-anchor="middle" >21</text>
<path d="M394.5 509.5 L398.4 522.5 L394.5 541.5 L390.6 522.5 Z" fill="#141414"/><rect x="392.6" y="524" width="3.8" height="1.9" fill="#fff"/>
<line x1="485" y1="613.6" x2="505" y2="613.6" stroke="#3a3a3a" stroke-width="1.15" />
<path d="M485.0 613.6 L495.0 611.1 L495.0 616.1 Z" fill="#141414"/>
<path d="M505.0 613.6 L495.0 616.1 L495.0 611.1 Z" fill="#141414"/>
<text x="469" y="621" font-size="16.5" font-family="Liberation Sans" fill="#2e2e2e" text-anchor="middle" >3.5</text>
<line x1="435" y1="687.3" x2="480" y2="687.3" stroke="#3a3a3a" stroke-width="1.15" />
<line x1="510" y1="687.3" x2="555.5" y2="687.3" stroke="#3a3a3a" stroke-width="1.15" />
<path d="M435.0 687.3 L451.0 683.5 L451.0 691.0 Z" fill="#141414"/>
<path d="M555.5 687.3 L539.5 691.0 L539.5 683.5 Z" fill="#141414"/>
<text x="495" y="694" font-size="17" font-family="Liberation Sans" fill="#2e2e2e" text-anchor="middle" >21</text>
<line x1="392.2" y1="709.6" x2="456.5" y2="709.6" stroke="#3a3a3a" stroke-width="1.15" />
<line x1="508" y1="709.6" x2="597.8" y2="709.6" stroke="#3a3a3a" stroke-width="1.15" />
<path d="M392.2 709.6 L408.2 705.9 L408.2 713.4 Z" fill="#141414"/>
<path d="M597.8 709.6 L581.8 713.4 L581.8 705.9 Z" fill="#141414"/>
<text x="472" y="715.5" font-size="15" font-family="Liberation Serif" fill="#9a9a9a" text-anchor="middle" font-style="italic" font-weight="bold">fx</text>
<text x="493" y="716" font-size="17" font-family="Liberation Sans" fill="#2e2e2e" text-anchor="middle" >36</text>
<line x1="604" y1="386.7" x2="691.9" y2="434.2" stroke="#3a3a3a" stroke-width="1.15" />
<line x1="523" y1="538" x2="609.8" y2="584.7" stroke="#3a3a3a" stroke-width="1.15" />
<line x1="691.9" y1="434.2" x2="655.6" y2="494" stroke="#3a3a3a" stroke-width="1.15" />
<line x1="639.8" y1="522.5" x2="609.8" y2="584.7" stroke="#3a3a3a" stroke-width="1.15" />
<path d="M691.9 434.2 L687.6 450.1 L681.0 446.5 Z" fill="#141414"/>
<path d="M609.8 584.7 L614.1 568.8 L620.7 572.4 Z" fill="#141414"/>
<text x="648" y="515" font-size="17" font-family="Liberation Sans" fill="#2e2e2e" text-anchor="middle" >30</text>
<line x1="634.5" y1="435.9" x2="644" y2="440.6" stroke="#3a3a3a" stroke-width="1.15" />
<line x1="581.6" y1="537.3" x2="590.5" y2="541.8" stroke="#3a3a3a" stroke-width="1.15" />
<line x1="639.5" y1="438.5" x2="617" y2="481.3" stroke="#3a3a3a" stroke-width="1.15" />
<line x1="601.7" y1="511" x2="586.5" y2="539.5" stroke="#3a3a3a" stroke-width="1.15" />
<path d="M639.5 438.5 L635.2 454.4 L628.6 450.8 Z" fill="#141414"/>
<path d="M586.5 539.5 L590.8 523.6 L597.4 527.2 Z" fill="#141414"/>
<text x="609" y="504" font-size="17" font-family="Liberation Sans" fill="#2e2e2e" text-anchor="middle" >20</text>
<line x1="505" y1="541.8" x2="483.7" y2="581.3" stroke="#3a3a3a" stroke-width="1.15" />
<line x1="575" y1="533" x2="533.8" y2="608" stroke="#3a3a3a" stroke-width="1.15" />
<path d="M483.7 581.3 L497.7 584.8 L494.4 591.0 Z" fill="#141414"/>
<path d="M533.8 608.0 L519.8 604.5 L523.1 598.3 Z" fill="#141414"/>
<text x="514" y="601.5" font-size="17" font-family="Liberation Sans" fill="#2e2e2e" text-anchor="middle" >10</text>
<line x1="598.6" y1="370.2" x2="611.8" y2="347" stroke="#3a3a3a" stroke-width="1.15" />
<line x1="598.6" y1="382.8" x2="616.2" y2="349.7" stroke="#3a3a3a" stroke-width="1.15" />
<line x1="611.8" y1="347" x2="627.6" y2="355.8" stroke="#3a3a3a" stroke-width="1.15" />
<text x="637" y="368" font-size="17" font-family="Liberation Sans" fill="#2e2e2e" text-anchor="middle" >1</text>
<text x="810" y="464.5" font-size="15" font-family="Liberation Serif" fill="#9a9a9a" text-anchor="middle" font-style="italic" font-weight="bold">fx</text>
<text x="832" y="465" font-size="17" font-family="Liberation Sans" fill="#2e2e2e" text-anchor="middle" >30</text>
<path d="M435.4 307.3 L555 307.3 L580.7 364.6 L409.6 364.6 Z" fill="none" stroke="#1a1a1a" stroke-width="2.3" stroke-linejoin="round"/>
<path d="M392 370.2 L598 370.2 L505 541.5 L485 541.5 Z" fill="none" stroke="#1a1a1a" stroke-width="2.3" stroke-linejoin="round"/>
<path d="M392.4 383.3 L360.8 433.2 L415.4 533.6 L474.2 533.6 Z" fill="none" stroke="#1a1a1a" stroke-width="2.3" stroke-linejoin="round"/>
<path d="M597.6 383.3 L629.2 433.2 L574.6 533.6 L515.8 533.6 Z" fill="none" stroke="#1a1a1a" stroke-width="2.3" stroke-linejoin="round"/>
<line x1="495.1" y1="307.3" x2="495.1" y2="364.6" stroke="#1a1a1a" stroke-width="2.2" stroke-dasharray="0 6.7 3.5 6.5 30 100"/>
<line x1="495.1" y1="379.8" x2="495.1" y2="409.4" stroke="#1a1a1a" stroke-width="2.2" />
<line x1="495.1" y1="416.5" x2="495.1" y2="420" stroke="#1a1a1a" stroke-width="2.2" />
<line x1="495.1" y1="435" x2="495.1" y2="450" stroke="#1a1a1a" stroke-width="2.2" />
<line x1="495.1" y1="461.5" x2="495.1" y2="465" stroke="#1a1a1a" stroke-width="2.2" />
<line x1="495.1" y1="472.7" x2="495.1" y2="541.5" stroke="#1a1a1a" stroke-width="2.2" />
<line x1="435" y1="370.2" x2="435" y2="386.4" stroke="#1a1a1a" stroke-width="2.1" />
<line x1="435" y1="394" x2="435" y2="397.8" stroke="#1a1a1a" stroke-width="2.1" />
<line x1="435" y1="403.9" x2="435" y2="435.2" stroke="#1a1a1a" stroke-width="2.1" />
<line x1="435" y1="441" x2="435" y2="490.4" stroke="#1a1a1a" stroke-width="2.1" />
<line x1="555.5" y1="370.2" x2="555.5" y2="386.4" stroke="#1a1a1a" stroke-width="2.1" />
<line x1="555.5" y1="394" x2="555.5" y2="397.8" stroke="#1a1a1a" stroke-width="2.1" />
<line x1="555.5" y1="403.9" x2="555.5" y2="435.2" stroke="#1a1a1a" stroke-width="2.1" />
<line x1="555.5" y1="441" x2="555.5" y2="490.4" stroke="#1a1a1a" stroke-width="2.1" />
<line x1="435" y1="490.4" x2="555.5" y2="490.4" stroke="#1a1a1a" stroke-width="2.0" stroke-dasharray="30 5 0 0 30 7 4 7"/>
<line x1="466.4" y1="507" x2="523.5" y2="507" stroke="#1a1a1a" stroke-width="2.0" />
<line x1="495.1" y1="490.4" x2="495.1" y2="541.5" stroke="#1a1a1a" stroke-width="2.3" />
<line x1="553" y1="456" x2="602" y2="483.5" stroke="#1a1a1a" stroke-width="2.0" stroke-dasharray="36 5 4 5"/>
<circle cx="495.1" cy="430.4" r="4.6" fill="#e1e3e6" stroke="#1a1a1a" stroke-width="1.7"/>
<circle cx="495.1" cy="430.4" r="1.5" fill="#141414"/>
<line x1="415.3" y1="366" x2="415.3" y2="384" stroke="#3a3a3a" stroke-width="1.2" />
<line x1="411" y1="375.5" x2="419.5" y2="375.5" stroke="#3a3a3a" stroke-width="1.2" />
<line x1="412" y1="368.5" x2="418.5" y2="368.5" stroke="#3a3a3a" stroke-width="1.0" />
<circle cx="435.4" cy="307.3" r="3.1" fill="#141414"/>
<circle cx="555" cy="307.3" r="3.1" fill="#141414"/>
<circle cx="409.6" cy="364.6" r="3.1" fill="#141414"/>
<circle cx="580.7" cy="364.6" r="3.1" fill="#141414"/>
<circle cx="392" cy="370.2" r="3.1" fill="#141414"/>
<circle cx="435" cy="370.2" r="3.1" fill="#141414"/>
<circle cx="555.5" cy="370.2" r="3.1" fill="#141414"/>
<circle cx="598" cy="370.2" r="3.1" fill="#141414"/>
<circle cx="392.4" cy="383.3" r="3.1" fill="#141414"/>
<circle cx="597.6" cy="383.3" r="3.1" fill="#141414"/>
<circle cx="360.8" cy="433.2" r="3.1" fill="#141414"/>
<circle cx="629.2" cy="433.2" r="3.1" fill="#141414"/>
<circle cx="435" cy="490.4" r="3.1" fill="#141414"/>
<circle cx="555.5" cy="490.4" r="3.1" fill="#141414"/>
<circle cx="466.4" cy="507" r="3.1" fill="#141414"/>
<circle cx="523.5" cy="507" r="3.1" fill="#141414"/>
<circle cx="415.4" cy="533.6" r="3.1" fill="#141414"/>
<circle cx="474.2" cy="533.6" r="3.1" fill="#141414"/>
<circle cx="515.8" cy="533.6" r="3.1" fill="#141414"/>
<circle cx="574.6" cy="533.6" r="3.1" fill="#141414"/>
<circle cx="485.2" cy="541.5" r="3.1" fill="#141414"/>
<circle cx="505" cy="541.5" r="3.1" fill="#141414"/>
<circle cx="495.1" cy="307.3" r="4.1" fill="#141414"/>
<circle cx="495.1" cy="364.6" r="4.1" fill="#141414"/>
<circle cx="495.1" cy="370.2" r="4.1" fill="#141414"/>
<circle cx="495.1" cy="541.5" r="4.1" fill="#141414"/>
<circle cx="553" cy="456" r="4.1" fill="#141414"/>
<circle cx="556" cy="457.5" r="4.1" fill="#141414"/>
<circle cx="495.1" cy="490.4" r="2.6" fill="#141414"/>
<circle cx="495.1" cy="507" r="3.1" fill="#141414"/>
<circle cx="602" cy="483.5" r="3.9" fill="#141414"/></svg>
<!-- view cube -->
<svg style="left:690px;top:80px" width="170" height="170" viewBox="690 80 170 170">
<path d="M765 100.5 L772 91.5 L779 100.5 Z" fill="#8f8f8f"/>
<path d="M751 104 C738 108 729 113 724 118" stroke="#8f8f8f" stroke-width="4.5" fill="none"/>
<path d="M718 124 L720 110 L731 121 Z" fill="#8f8f8f"/>
<path d="M793 104 C806 108 815 113 820 118" stroke="#8f8f8f" stroke-width="4.5" fill="none"/>
<path d="M826 124 L824 110 L813 121 Z" fill="#8f8f8f"/>
<path d="M697.5 165.8 L707.5 158.5 L707.5 173 Z" fill="#8f8f8f"/>
<path d="M847.5 165.8 L837.5 158.5 L837.5 173 Z" fill="#8f8f8f"/>
<path d="M764 231 L780 231 L772 241 Z" fill="#8f8f8f"/>
<path d="M752.5 138 H792.5 A8 8 0 0 0 800.5 146 V186 A8 8 0 0 0 792.5 194 H752.5 A8 8 0 0 0 744.5 186 V146 A8 8 0 0 0 752.5 138 Z" fill="#e5e9ef"/>
<rect x="749.5" y="143" width="45.5" height="45.5" rx="9" fill="#fff"/>
<text x="772" y="170" font-size="13" font-family="Liberation Sans" fill="#333" text-anchor="middle">Top</text>
<line x1="741.9" y1="138" x2="741.9" y2="196.5" stroke="#5aaa5a" stroke-width="1.4"/>
<line x1="741.9" y1="196.5" x2="801" y2="196.5" stroke="#e05555" stroke-width="1.4"/>
<text x="741.5" y="132" font-size="11" font-family="Liberation Sans" fill="#5aaa5a" text-anchor="middle">Y</text>
<text x="811" y="201" font-size="11" font-family="Liberation Sans" fill="#e05555" text-anchor="middle">X</text>
<path d="M809 225 L816 222 L823 225 V235 L816 239 L809 235 Z" fill="#aaa" stroke="#333" stroke-width="1.2"/>
<path d="M809 225 L816 228 L823 225 M816 228 V239" stroke="#333" stroke-width="1" fill="#fff"/>
<path d="M816 228 L823 225 V235 L816 239 Z" fill="#eee"/>
<path d="M809 225 L816 222 L823 225 L816 228 Z" fill="#fff" stroke="#333" stroke-width="0.8"/>
<path d="M834 230 H842 L838 235 Z" fill="#222"/>
</svg>
<!-- right icon column -->
<div class="a" style="left:830px;top:319px;width:33px;height:133px;background:#e6e6e6;border:1px solid #cfcfcf"></div>
<div class="a" style="left:830px;top:352px;width:33px;height:1px;background:#cfcfcf"></div>
<div class="a" style="left:830px;top:385px;width:33px;height:1px;background:#cfcfcf"></div>
<div class="a" style="left:831px;top:419px;width:31px;height:32px;background:#fff;border-top:1px solid #cfcfcf"></div>
<div class="a" style="left:830px;top:463px;width:33px;height:99px;background:#e6e6e6;border:1px solid #cfcfcf"></div>
<div class="a" style="left:830px;top:496px;width:33px;height:1px;background:#cfcfcf"></div>
<div class="a" style="left:830px;top:529px;width:33px;height:1px;background:#cfcfcf"></div>
<svg style="left:836px;top:325px" width="22" height="22" viewBox="0 0 22 22"><path d="M4 14 L9.5 2.5 L12.5 3.5 L8 14 Z" fill="#777" stroke="#444" stroke-width="0.7"/><path d="M7 14 L13 4.5 L16 6 L11 14 Z" fill="#999" stroke="#444" stroke-width="0.7"/><path d="M10 14 L16.5 7.5 L19 9.5 L14 14 Z" fill="#bbb" stroke="#444" stroke-width="0.7"/><rect x="2" y="14" width="18" height="6" rx="1" fill="#fff" stroke="#444" stroke-width="1"/><circle cx="5.5" cy="17" r="1.2" fill="#444"/><path d="M9 14 V20 M15 14 V20" stroke="#444" stroke-width="0.8"/></svg>
<svg style="left:836px;top:358px" width="22" height="22" viewBox="0 0 22 22"><rect x="1" y="1" width="9" height="8" fill="#3a6fd0"/><path d="M1 3.7 H10 M1 6.3 H10 M4 1 V9 M7 1 V9" stroke="#e6e6e6" stroke-width="0.8"/><path d="M6 10 L13 7 L20 10 V18 L13 21 L6 18 Z" fill="#fff" stroke="#222" stroke-width="1.3"/><path d="M6 10 L13 13 L20 10 M13 13 V21" stroke="#222" stroke-width="1.2" fill="none"/></svg>
<svg style="left:836px;top:391px" width="22" height="22" viewBox="0 0 22 22"><rect x="2" y="1" width="9" height="8" fill="#fff" stroke="#333" stroke-width="0.9"/><path d="M2 3.7 H11 M2 6.3 H11 M5 1 V9 M8 1 V9" stroke="#333" stroke-width="0.8"/><path d="M7 10 L13 7.5 L19 10 V16 L13 19 L7 16 Z" fill="#fff" stroke="#222" stroke-width="1.2"/><path d="M7 10 L13 12.5 L19 10 M13 12.5 V19" stroke="#222" stroke-width="1" fill="none"/><path d="M3 11 C1.5 14 1.5 17 3 20 M20.5 11 C22 14 22 17 20.5 20" stroke="#222" stroke-width="1.2" fill="none"/></svg>
<svg style="left:836px;top:426px" width="21" height="19" viewBox="0 0 21 19"><path d="M1 1 H10 V7.5 H1 Z" fill="#222"/><path d="M1.2 3.2 H9.8 M1.2 5.3 H9.8" stroke="#fff" stroke-width="0.8"/><path d="M4 1.3 V7.3 M7 1.3 V7.3" stroke="#fff" stroke-width="0.7"/><path d="M1.2 7 C0.8 10 1 14 2.2 17.5" stroke="#222" stroke-width="1.7" fill="none"/><path d="M17.3 4 C19.3 7.5 19.3 13 17.3 16.5" stroke="#222" stroke-width="1.7" fill="none"/><path d="M7 15 L13.5 7.5 M10 10.5 C10.5 13 11 15.5 14.5 15.3" stroke="#222" stroke-width="1.9" fill="none"/><circle cx="6" cy="15" r="1.8" fill="#222"/><circle cx="13.8" cy="7.8" r="1.6" fill="#222"/></svg>
<svg style="left:836px;top:469px" width="22" height="22" viewBox="0 0 22 22"><circle cx="11" cy="11" r="10" fill="#ddd"/><path d="M11 11 L11 2 A9 9 0 0 1 20 11 Z" fill="#3aa3e0"/><path d="M11 11 L20 11 A9 9 0 0 1 11 20 Z" fill="#f0b429"/><path d="M11 11 L11 20 A9 9 0 0 1 2 11 Z" fill="#e05252"/><path d="M11 11 L2 11 A9 9 0 0 1 11 2 Z" fill="#4cb050"/><path d="M4 4 L18 18 M18 4 L4 18" stroke="#ddd" stroke-width="1.5"/></svg>
<svg style="left:836px;top:502px" width="22" height="22" viewBox="0 0 22 22"><rect x="1" y="1" width="20" height="20" fill="#1a4fb5" stroke="#222" stroke-width="1"/><text x="11" y="16" font-size="11.5" font-weight="bold" font-family="Liberation Serif" fill="#fff" text-anchor="middle">MK</text></svg>
<svg style="left:836px;top:535px" width="22" height="22" viewBox="0 0 22 22"><rect x="1" y="1" width="20" height="20" fill="#fff" stroke="#d03030" stroke-width="1.4"/><text x="11" y="18" font-size="9" font-weight="bold" font-style="italic" font-family="Liberation Sans" fill="#d03030" text-anchor="middle">VS</text><path d="M5 7 l2 2 l3 -4 M13 5 l4 4 M17 5 l-4 4" stroke="#d03030" stroke-width="0.9" fill="none"/></svg>
<!-- bottom graphics icons -->
<svg style="left:763px;top:800px" width="18" height="14" viewBox="0 0 18 14"><circle cx="12" cy="5.5" r="4.5" fill="none" stroke="#333" stroke-width="1.4"/><circle cx="12" cy="5.5" r="1.5" fill="none" stroke="#333" stroke-width="1"/><path d="M12 10 H1 V13 H12 A4.5 4.5 0 0 0 16.5 8" fill="none" stroke="#333" stroke-width="1.3"/></svg>
<svg style="left:796px;top:800px" width="21" height="14" viewBox="0 0 21 14"><path d="M1.5 13 A9 9 0 0 1 19.5 13 Z" fill="none" stroke="#333" stroke-width="1.5"/><path d="M6 13 A4.5 4.5 0 0 1 15 13" fill="none" stroke="#333" stroke-width="1.3"/></svg>
<svg style="left:833px;top:799px" width="17" height="16" viewBox="0 0 17 16"><path d="M1 4 H16 M8.5 1 V14 M3 14.5 H14" stroke="#333" stroke-width="1.4"/><path d="M2.5 4 L0.5 10 H5 Z M14.5 4 L12 10 H16.5 Z" fill="none" stroke="#333" stroke-width="1.1"/></svg>
<!-- collapsed tree toggle button -->
<div class="a" style="left:245px;top:423px;width:34px;height:35px;background:#fff;border:1px solid #cdcdcd;border-left:none"></div>
<svg style="left:252px;top:432px" width="20" height="20" viewBox="0 0 20 20"><path d="M3 4.5 V19" stroke="#333" stroke-width="1.4"/><path d="M0.8 2 L3 4.5 L5.2 2" stroke="#333" stroke-width="1.1" fill="none"/><path d="M10 2.5 H18.5 M6 7.5 H18.5 M6 12.5 H18.5 M6 17.3 H18.5" stroke="#333" stroke-width="1.4"/></svg>
<!-- sketch dialog -->
<div class="a" style="left:246px;top:78px;width:220px;height:220px;background:rgba(255,255,255,0.96);box-shadow:1px 3px 5px rgba(0,0,0,0.22);border-left:1px solid #d0d0d0"></div>
<div class="t" style="left:252px;top:88px;font-size:12.6px;font-weight:bold;color:#2a2a2a">MasterSketch</div>
<div class="a" style="left:410px;top:79px;width:28px;height:28px;background:#0e8f1c"></div>
<svg style="left:415px;top:86px" width="18" height="14" viewBox="0 0 18 14"><path d="M2 7 L6.5 11.5 L16 2" stroke="#fff" stroke-width="3" fill="none"/></svg>
<svg style="left:446px;top:88px" width="13" height="12" viewBox="0 0 13 12"><path d="M1.5 1 L11.5 11 M11.5 1 L1.5 11" stroke="#c8283a" stroke-width="2.6"/></svg>
<div class="a" style="left:248px;top:107px;width:218px;height:1px;background:#dedede"></div>
<div class="a" style="left:249px;top:113px;width:188px;height:43px;border:1px solid #dcdcdc;border-radius:2px;background:#fff"></div>
<div class="t" style="left:255px;top:120px;font-size:10.3px;color:#666">Sketch plane</div>
<div class="t" style="left:256px;top:136px;font-size:13.3px;color:#555">Top plane</div>
<svg style="left:417px;top:140px" width="9" height="9" viewBox="0 0 9 9"><path d="M1 1 L8 8 M8 1 L1 8" stroke="#444" stroke-width="1.1"/></svg>
<svg style="left:441px;top:116px" width="19" height="19" viewBox="0 0 19 19"><circle cx="9.5" cy="9.5" r="8.6" fill="none" stroke="#333" stroke-width="1.1"/><circle cx="9.5" cy="9.5" r="6.4" fill="none" stroke="#333" stroke-width="1.1"/><path d="M9.5 3 V9.5 H16" stroke="#333" stroke-width="1.1" fill="none"/></svg>
<div class="a" style="left:250px;top:169px;width:13px;height:13px;border:1px solid #aaa;border-radius:3px;background:#fff"></div>
<div class="t" style="left:266px;top:169px;font-size:13.1px;color:#555">Disable imprinting</div>
<div class="a" style="left:250px;top:196px;width:13px;height:13px;border:1px solid #aaa;border-radius:3px;background:#fff"></div>
<div class="t" style="left:266px;top:196px;font-size:13.1px;color:#555">Show constraints</div>
<div class="a" style="left:250px;top:223px;width:13px;height:13px;border:1px solid #aaa;border-radius:3px;background:#fff"></div>
<div class="t" style="left:266px;top:223px;font-size:13.1px;color:#555">Show expressions</div>
<div class="a" style="left:250px;top:251px;width:13px;height:13px;border-radius:3px;background:#1f58b5"></div>
<svg style="left:252px;top:253px" width="9" height="9" viewBox="0 0 9 9"><path d="M1 4.5 L3.5 7 L8 1.8" stroke="#fff" stroke-width="1.8" fill="none"/></svg>
<div class="t" style="left:266px;top:250px;font-size:13.1px;color:#555">Show overdefined</div>
<div class="a" style="left:365px;top:273px;width:22px;height:22px;border:1px solid #cfcfcf;border-radius:3px;background:#f4f4f4"></div>
<svg style="left:367px;top:275px" width="18" height="18" viewBox="0 0 18 18"><circle cx="8.5" cy="8.5" r="7.3" fill="none" stroke="#222" stroke-width="1.3"/><path d="M5 12 L6 9 L12 3 L14 5 L8 11 Z" fill="none" stroke="#222" stroke-width="1"/><path d="M2.5 12.5 H14" stroke="#4a6fb5" stroke-width="1.3"/><path d="M13 13.5 L16.5 17" stroke="#222" stroke-width="1.5"/></svg>
<div class="a" style="left:391px;top:274px;width:49px;height:21px;border:1px solid #cfcfcf;border-radius:3px;background:#fff"></div>
<div class="t" style="left:402px;top:278px;font-size:13px;color:#333">Final</div>
<svg style="left:448px;top:281px" width="13" height="13" viewBox="0 0 13 13"><circle cx="6.5" cy="6.5" r="6.3" fill="#aaa"/><path d="M4.4 5 a2.1 2.1 0 1 1 2.9 1.9 c-.6 .3 -.8 .6 -.8 1.4" stroke="#fff" stroke-width="1.5" fill="none"/><circle cx="6.5" cy="10.1" r="0.95" fill="#fff"/></svg>

<!--GFX-END-->
<!-- RIGHT PANEL -->
<div class="a" style="left:862px;top:75px;width:674px;height:747px;background:#fff;border-left:1px solid #d4d4d4;border-top:1px solid #d4d4d4"></div>
<!-- BOTTOM TAB BAR -->
<div class="a" style="left:40px;top:822px;width:1496px;height:30px;background:#d6d6d6;border-top:1px solid #cdcdcd"></div>

<!-- right panel content -->
<div class="t" style="left:1160px;top:87px;font-size:13px;font-weight:bold;color:#2a4d9a">Variable table</div>
<div class="a" style="left:868px;top:105px;width:668px;height:2px;background:#1f4ea0"></div>
<!-- VS1 section -->
<div class="a" style="left:868px;top:108px;width:668px;height:34px;background:#e9e9e9;border-top:1px solid #d0d0d0;border-left:1px solid #d0d0d0"></div>
<svg style="left:875px;top:124px" width="11" height="7" viewBox="0 0 11 7"><path d="M1 1 L5.5 5.5 L10 1" stroke="#333" stroke-width="1.8" fill="none"/></svg>
<svg style="left:892px;top:116px" width="21" height="19" viewBox="0 0 21 19"><path d="M1 1 H10 V7.5 H1 Z" fill="#222"/><path d="M1.2 3.2 H9.8 M1.2 5.3 H9.8" stroke="#fff" stroke-width="0.8"/><path d="M4 1.3 V7.3 M7 1.3 V7.3" stroke="#fff" stroke-width="0.7"/><path d="M1.2 7 C0.8 10 1 14 2.2 17.5" stroke="#222" stroke-width="1.6" fill="none"/><path d="M17.3 4 C19.3 7.5 19.3 13 17.3 16.5" stroke="#222" stroke-width="1.6" fill="none"/><path d="M7 15 L13.5 7.5 M10 10.5 C10.5 13 11 15.5 14.5 15.3" stroke="#222" stroke-width="1.7" fill="none"/><circle cx="6" cy="15" r="1.7" fill="#222"/><circle cx="13.8" cy="7.8" r="1.5" fill="#222"/></svg>
<svg style="left:901px;top:128px" width="12" height="9" viewBox="0 0 12 9"><path d="M1.5 4.5 L4.5 7.5 L10.5 1.5" stroke="#1a9a2a" stroke-width="2.4" fill="none"/></svg>
<div class="t" style="left:917px;top:119px;font-size:16px;color:#2a2a2a">Variable Studio 1</div>
<svg style="left:1510px;top:124px" width="20" height="6" viewBox="0 0 20 6"><circle cx="3" cy="3" r="2.2" fill="#333"/><circle cx="10" cy="3" r="2.2" fill="#333"/><circle cx="17" cy="3" r="2.2" fill="#333"/></svg>
<!-- table 1 -->
<div class="a" style="left:868px;top:142px;width:561px;height:137px;border-left:1px solid #c8c8c8"></div>
<div class="a" style="left:868px;top:142px;width:140px;height:36px;background:#dcdcdc;border:1px solid #c8c8c8"></div>
<div class="a" style="left:1007px;top:142px;width:142px;height:36px;background:#e9e9e9;border:1px solid #c8c8c8"></div>
<div class="a" style="left:1148px;top:142px;width:141px;height:36px;background:#e9e9e9;border:1px solid #c8c8c8"></div>
<div class="a" style="left:1288px;top:142px;width:141px;height:36px;background:#e9e9e9;border:1px solid #c8c8c8"></div>
<div class="t" style="left:920px;top:153px;font-size:14.2px;font-weight:bold;color:#2a2a2a">Name</div>
<div class="t" style="left:1035px;top:153px;font-size:14.2px;font-weight:bold;color:#2a2a2a">Variable type</div>
<div class="t" style="left:1200px;top:153px;font-size:14.2px;font-weight:bold;color:#2a2a2a">Value</div>
<div class="t" style="left:1319px;top:153px;font-size:14.2px;font-weight:bold;color:#2a2a2a">Description</div>
<div class="a" style="left:868px;top:177px;width:140px;height:35px;border:1px solid #c8c8c8;background:#fff"></div>
<div class="a" style="left:1007px;top:177px;width:142px;height:35px;border:1px solid #c8c8c8;background:#fff"></div>
<div class="a" style="left:1148px;top:177px;width:141px;height:35px;border:1px solid #c8c8c8;background:#fff"></div>
<div class="a" style="left:1288px;top:177px;width:141px;height:35px;border:1px solid #c8c8c8;background:#fff"></div>
<div class="t" style="left:1016px;top:188px;font-size:13.9px;color:#333">Length</div>
<svg style="left:1135px;top:192px" width="8" height="5" viewBox="0 0 8 5"><path d="M0 0 H8 L4 4.5 Z" fill="#333"/></svg>
<div class="t" style="left:1155px;top:187px;font-size:13px;color:#333">36 in</div>
<div class="a" style="left:868px;top:211px;width:140px;height:35px;border:1px solid #c8c8c8;background:#fff"></div>
<div class="a" style="left:1007px;top:211px;width:142px;height:35px;border:1px solid #c8c8c8;background:#fff"></div>
<div class="a" style="left:1148px;top:211px;width:141px;height:35px;border:1px solid #c8c8c8;background:#fff"></div>
<div class="a" style="left:1288px;top:211px;width:141px;height:35px;border:1px solid #c8c8c8;background:#fff"></div>
<div class="t" style="left:1016px;top:222px;font-size:13.9px;color:#333">Length</div>
<svg style="left:1135px;top:226px" width="8" height="5" viewBox="0 0 8 5"><path d="M0 0 H8 L4 4.5 Z" fill="#333"/></svg>
<div class="t" style="left:1155px;top:221px;font-size:13px;color:#333">30 in</div>
<div class="t" style="left:875px;top:186px;font-size:13.1px;color:#333">BasePlateWidth</div>
<div class="a" style="left:868px;top:211px;width:141px;height:35px;border:2px solid #1f58b5;background:#fff;box-shadow:inset 0 0 0 2px #ececec"></div>
<div class="a" style="left:875px;top:218px;width:98px;height:18px;background:#3862cc"></div><div class="a" style="left:875px;top:234px;width:98px;height:1.5px;background:repeating-linear-gradient(90deg,#d0304a 0 2px,transparent 2px 4px)"></div>
<div class="t" style="left:875px;top:221px;font-size:13.1px;color:#fff">BasePlateHeight</div>
<div class="a" style="left:868px;top:245px;width:141px;height:34px;border:1px solid #c8c8c8;border-top:none;background:#fff"></div>
<div class="t" style="left:875px;top:255px;font-size:13.3px;font-style:italic;color:#8a8a8a">Name</div>
<div class="a" style="left:868px;top:289px;width:668px;height:1px;background:#d0d0d0"></div>
<!-- PS1 section -->
<div class="a" style="left:868px;top:290px;width:668px;height:34px;background:#e9e9e9;border-left:1px solid #d0d0d0"></div>
<svg style="left:875px;top:305px" width="11" height="7" viewBox="0 0 11 7"><path d="M1 1 L5.5 5.5 L10 1" stroke="#333" stroke-width="1.8" fill="none"/></svg>
<div class="t" style="left:888px;top:301px;font-size:16px;color:#2a2a2a">Part Studio 1</div>
<svg style="left:1510px;top:305px" width="20" height="6" viewBox="0 0 20 6"><circle cx="3" cy="3" r="2.2" fill="#333"/><circle cx="10" cy="3" r="2.2" fill="#333"/><circle cx="17" cy="3" r="2.2" fill="#333"/></svg>
<div class="a" style="left:868px;top:323px;width:140px;height:35px;background:#e9e9e9;border:1px solid #c8c8c8"></div>
<div class="a" style="left:1007px;top:323px;width:142px;height:35px;background:#e9e9e9;border:1px solid #c8c8c8"></div>
<div class="a" style="left:1148px;top:323px;width:141px;height:35px;background:#e9e9e9;border:1px solid #c8c8c8"></div>
<div class="a" style="left:1288px;top:323px;width:141px;height:35px;background:#e9e9e9;border:1px solid #c8c8c8"></div>
<div class="t" style="left:920px;top:333px;font-size:14.2px;font-weight:bold;color:#2a2a2a">Name</div>
<div class="t" style="left:1035px;top:333px;font-size:14.2px;font-weight:bold;color:#2a2a2a">Variable type</div>
<div class="t" style="left:1200px;top:333px;font-size:14.2px;font-weight:bold;color:#2a2a2a">Value</div>
<div class="t" style="left:1319px;top:333px;font-size:14.2px;font-weight:bold;color:#2a2a2a">Description</div>
<div class="a" style="left:868px;top:357px;width:141px;height:35px;border:1px solid #c8c8c8;background:#fff"></div>
<div class="t" style="left:876px;top:368px;font-size:13.3px;font-style:italic;color:#8a8a8a">Name</div>
<!-- bottom bar -->
<div class="a" style="left:868px;top:782px;width:668px;height:40px;background:#ececec;border-top:1px solid #d8d8d8;border-left:1px solid #d8d8d8"></div>
<div class="a" style="left:1089px;top:784px;width:203px;height:35px;background:#fff;border:1px solid #c4c4c4;border-radius:5px"></div>
<div class="a" style="left:1266px;top:785px;width:1px;height:33px;background:#c4c4c4"></div>
<svg style="left:1100px;top:792px" width="21" height="19" viewBox="0 0 21 19"><path d="M1 1 H10 V7.5 H1 Z" fill="#222"/><path d="M1.2 3.2 H9.8 M1.2 5.3 H9.8" stroke="#fff" stroke-width="0.8"/><path d="M4 1.3 V7.3 M7 1.3 V7.3" stroke="#fff" stroke-width="0.7"/><path d="M1.2 7 C0.8 10 1 14 2.2 17.5" stroke="#222" stroke-width="1.6" fill="none"/><path d="M17.3 4 C19.3 7.5 19.3 13 17.3 16.5" stroke="#222" stroke-width="1.6" fill="none"/><path d="M7 15 L13.5 7.5 M10 10.5 C10.5 13 11 15.5 14.5 15.3" stroke="#222" stroke-width="1.7" fill="none"/><circle cx="6" cy="15" r="1.7" fill="#222"/><circle cx="13.8" cy="7.8" r="1.5" fill="#222"/></svg>
<div class="t" style="left:1123px;top:795px;font-size:13.9px;color:#333">Insert Variable Studio</div>
<svg style="left:1275px;top:799px" width="9" height="5" viewBox="0 0 9 5"><path d="M0 5 H9 L4.5 0 Z" fill="#333"/></svg>
<svg style="left:1512px;top:795px" width="14" height="14" viewBox="0 0 14 14"><circle cx="7" cy="7" r="6.5" fill="#aaa"/><path d="M4.8 5.3 a2.2 2.2 0 1 1 3 2 c-.7 .4 -.8 .7 -.8 1.5" stroke="#fff" stroke-width="1.6" fill="none"/><circle cx="7" cy="10.8" r="1" fill="#fff"/></svg>

<!-- bottom tabs -->
<div class="a" style="left:40px;top:822px;width:39px;height:30px;background:#d4d4d4"></div>
<div class="a" style="left:48px;top:835px;width:16px;height:2.4px;background:#444"></div>
<div class="a" style="left:54.8px;top:828px;width:2.4px;height:16px;background:#444"></div>
<div class="a" style="left:80px;top:822px;width:199px;height:30px;background:#fff"></div>
<div class="a" style="left:80px;top:849px;width:199px;height:3px;background:#1f58b5;border-radius:2px"></div>
<svg style="left:90px;top:825px" width="18" height="20" viewBox="0 0 18 20"><path d="M1.5 5 C1.5 3.5 6.5 3.5 6.5 5 V19 H1.5 Z" fill="none" stroke="#333" stroke-width="1.1"/><path d="M8 3 C8 1 16.5 1 16.5 3 V19 H8 Z" fill="none" stroke="#333" stroke-width="1.1"/><path d="M10.5 3.5 V19" stroke="#333" stroke-width="0.8"/></svg>
<div class="t" style="left:112px;top:829px;font-size:13.9px;color:#333">Part Studio 1</div>
<div class="a" style="left:280px;top:822px;width:201px;height:26px;background:#e9e9e9;border-radius:0 0 4px 4px;box-shadow:0 1px 2px rgba(0,0,0,0.18)"></div>
<svg style="left:291px;top:825px" width="21" height="19" viewBox="0 0 21 19"><path d="M1 1 H10 V7.5 H1 Z" fill="#222"/><path d="M1.2 3.2 H9.8 M1.2 5.3 H9.8" stroke="#fff" stroke-width="0.8"/><path d="M4 1.3 V7.3 M7 1.3 V7.3" stroke="#fff" stroke-width="0.7"/><path d="M1.2 7 C0.8 10 1 14 2.2 17.5" stroke="#222" stroke-width="1.6" fill="none"/><path d="M17.3 4 C19.3 7.5 19.3 13 17.3 16.5" stroke="#222" stroke-width="1.6" fill="none"/><path d="M7 15 L13.5 7.5 M10 10.5 C10.5 13 11 15.5 14.5 15.3" stroke="#222" stroke-width="1.7" fill="none"/><circle cx="6" cy="15" r="1.7" fill="#222"/><circle cx="13.8" cy="7.8" r="1.5" fill="#222"/></svg>
<div class="t" style="left:314px;top:829px;font-size:13.7px;color:#666">Variable Studio 1</div>
<div class="a" style="left:483px;top:822px;width:199px;height:26px;background:#e9e9e9;border-radius:0 0 4px 4px;box-shadow:0 1px 2px rgba(0,0,0,0.18)"></div>
<svg style="left:493px;top:825px" width="18" height="19" viewBox="0 0 18 19"><path d="M1 4 L4 1 H17 V15 L14 18 H1 Z" fill="#fff" stroke="#333" stroke-width="1.1"/><path d="M1 4 H14 V18 M14 4 L17 1" stroke="#333" stroke-width="1" fill="none"/><rect x="3.5" y="6" width="8.5" height="9" fill="#888"/></svg>
<div class="t" style="left:516px;top:829px;font-size:13.9px;color:#666">Assembly 1</div>
<div class="a" style="left:685px;top:822px;width:200px;height:26px;background:#e9e9e9;border-radius:0 0 4px 4px;box-shadow:0 1px 2px rgba(0,0,0,0.18)"></div>
<svg style="left:696px;top:827px" width="19" height="16" viewBox="0 0 19 16"><path d="M1 1.5 H7 L8.5 3.5 H18 V15 H1 Z" fill="none" stroke="#444" stroke-width="1.1"/><path d="M1 5.5 H18" stroke="#444" stroke-width="1"/></svg>
<div class="t" style="left:718px;top:829px;font-size:13.9px;color:#666">Folder 1</div>

<!--ANN-START-->
<!-- red annotation arrow -->
<svg style="left:990px;top:250px" width="110" height="85" viewBox="990 250 110 85">
<path d="M999.5 261.9 L1037.7 268.5 L1031.1 278.8 L1086.1 319.1 L1078.8 327.9 L1024.5 288.3 L1016.4 296.4 Z" fill="#e60d12"/>
</svg>
<div class="a" style="left:1087.5px;top:331px;width:31px;height:31px;border-radius:50%;background:#e4101a"></div>
<div class="t" style="left:1097px;top:336px;font-size:22px;font-weight:bold;color:#fff">3</div>

<!--ANN-END-->
</body></html>
